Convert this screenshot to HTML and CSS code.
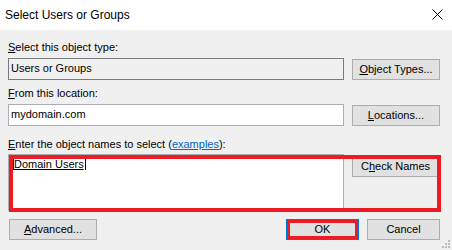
FILE: index.html
```html
<!DOCTYPE html>
<html>
<head>
<meta charset="utf-8">
<link rel="stylesheet" href="styles.css">
</head>
<body>
<div class="dialog">
  <div class="titlebar">
    <span class="title">Select Users or Groups</span>
    <svg class="close" width="11" height="11" viewBox="0 0 11 11"><path d="M0.5 0.5 L10.5 10.5 M10.5 0.5 L0.5 10.5" stroke="#000" stroke-width="1" fill="none"/></svg>
  </div>
  <div class="body">
    <div class="label label-first"><u>S</u>elect this object type:</div>
    <div class="row">
      <div class="textbox tb-readonly">Users or Groups</div>
      <button class="btn"><u>O</u>bject Types...</button>
    </div>
    <div class="label label-second"><u>F</u>rom this location:</div>
    <div class="row">
      <div class="textbox tb-white">mydomain.com</div>
      <button class="btn"><u>L</u>ocations...</button>
    </div>
    <div class="label label-third"><u>E</u>nter the object names to select (<a class="link">examples</a>):</div>
    <div class="row row-names">
      <div class="textbox tb-names"><span class="name">Domain Users</span></div>
      <button class="btn btn-check">C<span class="ul">h</span>eck Names</button>
      <div class="redframe"></div>
    </div>
    <div class="row row-bottom">
      <button class="btn btn-adv"><u>A</u>dvanced...</button>
      <div class="spacer"></div>
      <button class="btn btn-ok">OK</button>
      <button class="btn btn-cancel">Cancel</button>
    </div>
  </div>
  <svg class="grip" width="9" height="9" viewBox="0 0 9 9">
    <rect x="6" y="0" width="2" height="2" fill="#bcbcbc"/>
    <rect x="3" y="3" width="2" height="2" fill="#bcbcbc"/>
    <rect x="6" y="3" width="2" height="2" fill="#bcbcbc"/>
    <rect x="0" y="6" width="2" height="2" fill="#bcbcbc"/>
    <rect x="3" y="6" width="2" height="2" fill="#bcbcbc"/>
    <rect x="6" y="6" width="2" height="2" fill="#bcbcbc"/>
  </svg>
</div>
</body>
</html>
```
FILE: styles.css
```css
* { box-sizing: border-box; }
html, body { margin: 0; padding: 0; }
body { width: 452px; height: 250px; overflow: hidden; }
.dialog {
  position: relative;
  width: 452px;
  height: 250px;
  background: #f0f0f0;
  font-family: "Liberation Sans", Arial, sans-serif;
  font-size: 11px;
  color: #000;
}
.titlebar {
  height: 30px;
  background: #fff;
  display: flex;
  align-items: center;
  justify-content: space-between;
  padding: 0 9px 0 5px;
}
.title { font-size: 12px; font-family: "Liberation Sans", Arial, sans-serif; }
.close { margin-top: -2px; }
.body { padding: 0 12px 0 8px; }
.label { line-height: 13px; height: 13px; }
.label-first { margin-top: 11px; margin-bottom: 4px; }
.label-second { margin-top: 7px; margin-bottom: 4px; }
.label-third { margin-top: 12px; margin-bottom: 3px; }
.link { color: #0066cc; text-decoration: underline; }
.row { display: flex; align-items: center; gap: 8px; }
.textbox {
  width: 336px;
  height: 22px;
  border: 1px solid #7a7a7a;
  padding: 3px 2px 0 2px;
  line-height: 13px;
  white-space: nowrap;
}
.tb-readonly { background: #f0f0f0; }
.tb-white { background: #fff; border-color: #abadb3; }
.btn {
  width: 88px;
  height: 21px;
  padding: 0;
  margin: 0;
  background: #e1e1e1;
  border: 1px solid #adadad;
  font-family: "Liberation Sans", Arial, sans-serif;
  font-size: 11px;
  color: #000;
  line-height: 17px;
}
.row-names { position: relative; align-items: flex-start; }
.tb-names { height: 57px; background: #fff; padding: 3px 0 0 4px; border-color: #adadad; border-bottom: none; }
.name {
  display: inline-block;
  line-height: 12px;
  text-decoration: underline;
  border-left: 1px solid #000;
  border-right: 1px solid #000;
  padding: 0 1px 0 0;
}
.btn-check { margin-top: 2px; width: 87px; }
.ul { text-decoration: underline; }
.redframe {
  position: absolute;
  left: 1px;
  top: 1px;
  width: 432px;
  height: 57px;
  border: 4px solid #ed1c24;
}
.row-bottom { margin-top: 8px; gap: 8px; }
.btn-adv { margin-left: 1px; width: 88px; }
.spacer { flex: 1; }
.btn-ok {
  width: 73px;
  border: 1px solid #0078d7;
  outline: 3px solid #ed1c24;
  outline-offset: -4px;
}
.btn-cancel { width: 73px; }
.grip { position: absolute; right: 1px; bottom: 1px; }
```
